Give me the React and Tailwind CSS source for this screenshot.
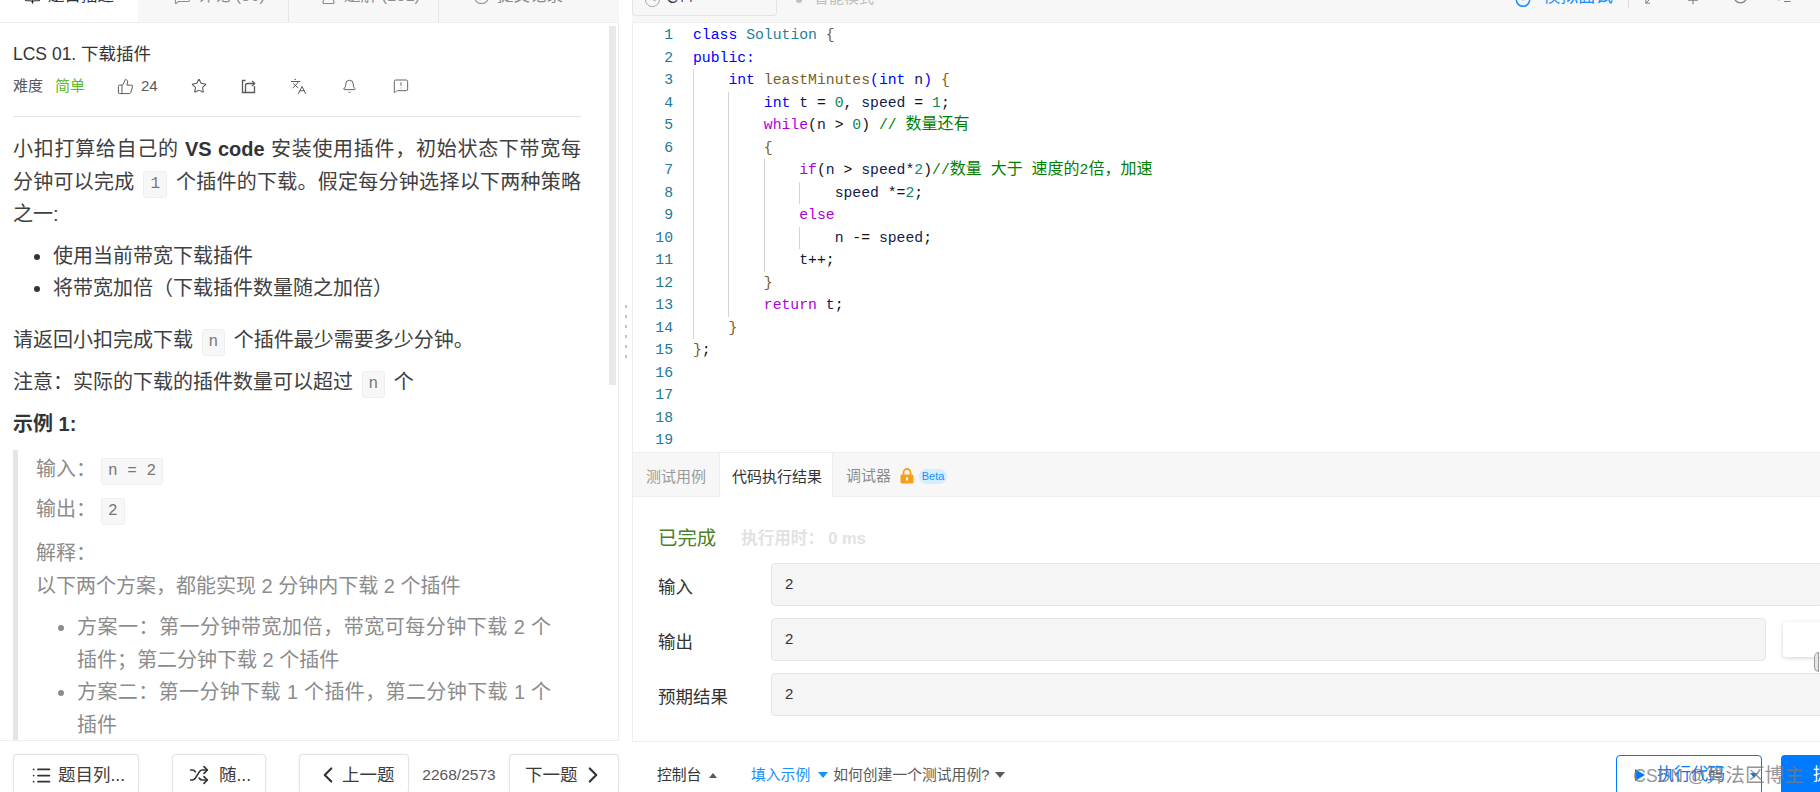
import React from "react";
import {
  ThumbsUp, Star, Languages, Bell, MessageSquareWarning, List, Shuffle, ChevronLeft, ChevronRight,
  BookOpen, MessageSquare, FlaskConical, Clock, Pin, RotateCcw, Terminal, Timer, Maximize2,
} from "lucide-react";

const sans = "[font-family:'Liberation_Sans','Noto_Sans_CJK_SC',sans-serif]";

function C({ children, cls }) {
  return (
    <code className={["inline-block h-[27px] mx-[3px] px-[6px] align-[1px] rounded-[3px] border border-[#eeeeee] bg-[#f7f7f7] text-[#777777] text-[16px] leading-[25px] [font-family:'Liberation_Mono',monospace]", cls].join(" ")}>
      {children}
    </code>
  );
}

const K = ({ children }) => <span className="text-[#0000ff]">{children}</span>;
const P = ({ children }) => <span className="text-[#af00db]">{children}</span>;
const N = ({ children }) => <span className="text-[#098658]">{children}</span>;
const V = ({ children }) => <span className="text-[#111a4d]">{children}</span>;
const F = ({ children }) => <span className="text-[#795e26]">{children}</span>;
const T = ({ children }) => <span className="text-[#267f99]">{children}</span>;
const G = ({ children }) => <span className="text-[#008000]">{children}</span>;
const Z = ({ children }) => (
  <span className="text-[16px] leading-[0] [font-family:'Noto_Sans_CJK_SC',sans-serif]">{children}</span>
);

const lines = [
  { g: 0, c: <><K>class</K> <T>Solution</T> <F>{"{"}</F></> },
  { g: 0, c: <K>public:</K> },
  { g: 1, c: <>{"    "}<K>int</K> <F>leastMinutes</F><K>(</K><K>int</K> <V>n</V><K>)</K> <F>{"{"}</F></> },
  { g: 2, c: <>{"        "}<K>int</K> <V>t</V> = <N>0</N>, <V>speed</V> = <N>1</N>;</> },
  { g: 2, c: <>{"        "}<P>while</P>(<V>n</V> &gt; <N>0</N>) <G>// <Z>数量还有</Z></G></> },
  { g: 2, c: <>{"        "}<F>{"{"}</F></> },
  { g: 3, c: <>{"            "}<P>if</P>(<V>n</V> &gt; <V>speed</V>*<N>2</N>)<G>//<Z>数量</Z> <Z>大于</Z> <Z>速度的</Z>2<Z>倍，加速</Z></G></> },
  { g: 4, c: <>{"                "}<V>speed</V> *=<N>2</N>;</> },
  { g: 3, c: <>{"            "}<P>else</P></> },
  { g: 4, c: <>{"                "}<V>n</V> -= <V>speed</V>;</> },
  { g: 3, c: <>{"            "}<V>t</V>++;</> },
  { g: 2, c: <>{"        "}<F>{"}"}</F></> },
  { g: 2, c: <>{"        "}<P>return</P> <V>t</V>;</> },
  { g: 1, c: <>{"    "}<F>{"}"}</F></> },
  { g: 0, c: <><F>{"}"}</F>;</> },
  { g: 0, c: null },
  { g: 0, c: null },
  { g: 0, c: null },
  { g: 0, c: null },
];

function CodeLine({ n, line }) {
  return (
    <div className="flex h-[22.5px] leading-[22.5px]">
      <div className="w-[40px] text-right text-[#237893] shrink-0">{n}</div>
      <div className="relative ml-[20px] whitespace-pre text-[#111111]">
        {[0, 1, 2, 3].slice(0, line.g).map((i) => (
          <span key={i} className={["absolute top-0 h-full w-px bg-[#d3d3d3]", ["left-0", "left-[35px]", "left-[71px]", "left-[106px]"][i]].join(" ")} />
        ))}
        {line.c}
      </div>
    </div>
  );
}

function ShareIcon() {
  return (
    <svg width="16" height="16" viewBox="0 0 16 16" fill="none" stroke="#595959" strokeWidth="1.3">
      <path d="M4.5 2.5H1.5v12h12V8" />
      <path d="M4.5 14V7.5a2 2 0 0 1 2-2h7" />
      <path d="M11 3l2.8 2.5L11 8" strokeWidth="1.1" />
    </svg>
  );
}

function LockIcon() {
  return (
    <svg width="14" height="16" viewBox="0 0 14 16" className="ml-[9px]">
      <path d="M3.5 7V4.5a3.5 3.5 0 0 1 7 0V7" fill="none" stroke="#fa9d1c" strokeWidth="1.8" />
      <rect x="0.5" y="6.5" width="13" height="9" rx="1.5" fill="#fa9d1c" />
      <rect x="6" y="9.5" width="2" height="3" fill="#ffffff" />
    </svg>
  );
}

function TopTab({ icon: Icon, label, cls }) {
  return (
    <div className={["h-[23px] flex items-end pb-[18px] gap-[7px] text-[16.5px] leading-[20px]", cls].join(" ")}>
      <Icon size={17} strokeWidth={1.5} className="shrink-0" />
      <span className="whitespace-nowrap">{label}</span>
    </div>
  );
}

function Row({ label, children }) {
  return (
    <div className="flex mb-[12px] h-[43px]">
      <div className="w-[138px] pl-[25px] pt-[12px] text-[17.5px] leading-[24px] text-[#333333] shrink-0">{label}</div>
      {children}
    </div>
  );
}

function Box({ cls }) {
  return (
    <div className={["h-[43px] px-[13px] pt-[9px] rounded-[4px] border border-[#e4e4e4] bg-[#f5f5f5] text-[15px] leading-[22px] text-[#333333]", cls].join(" ")}>
      2
    </div>
  );
}

function Btn({ cls, children }) {
  return (
    <div className={["h-[40px] shrink-0 flex items-center pt-[2px] rounded-[4px] border border-[#e4e4e4] bg-white text-[17.5px] text-[#3c3c3c] shadow-[0_0_2px_rgba(0,0,0,0.08)]", cls].join(" ")}>
      {children}
    </div>
  );
}

export default function App() {
  return (
    <div className={"relative w-[1820px] h-[792px] overflow-hidden bg-white flex " + sans}>
      {/* left column */}
      <div className="w-[619px] h-full flex flex-col shrink-0">
        <div className="h-[23px] flex bg-[#f7f7f7] border-b border-[#eeeeee] text-[#8c8c8c] overflow-hidden shrink-0">
          <TopTab icon={BookOpen} label="题目描述" cls="w-[138px] pl-[24px] bg-white -mb-px text-[#333333]" />
          <TopTab icon={MessageSquare} label="评论 (56)" cls="w-[151px] pl-[36px] border-r border-[#e6e6e6]" />
          <TopTab icon={FlaskConical} label="题解 (151)" cls="w-[150px] pl-[31px] border-r border-[#e6e6e6]" />
          <TopTab icon={Clock} label="提交记录" cls="pl-[34px]" />
        </div>

        <div className="relative flex-1 border-r border-b border-[#eeeeee] overflow-hidden pl-[13px] text-[#404040]">
          <div className="absolute right-[2px] top-[3px] w-[7px] h-[359px] bg-[#e9e9e9]" />
          <div className="w-[568px]">
            <div className="pt-[19px] text-[17.5px] leading-[24px] text-[#333333]">LCS 01. 下载插件</div>
            <div className="mt-[9px] h-[22px] flex items-center text-[15px] text-[#595959]">
              <span className="w-[42px]">难度</span>
              <span className="w-[63px] text-[#5cb82c]">简单</span>
              <ThumbsUp size={17} strokeWidth={1.4} className="ml-[-1px]" />
              <span className="ml-[7px] w-[50px]">24</span>
              <Star size={16} strokeWidth={1.6} />
              <span className="ml-[34px]"><ShareIcon /></span>
              <Languages size={17} strokeWidth={1.4} className="ml-[33px]" />
              <Bell size={15} strokeWidth={1.5} className="ml-[35px]" />
              <MessageSquareWarning size={16} strokeWidth={1.4} className="ml-[36px]" />
            </div>
            <div className="mt-[19px] h-px bg-[#e5e5e5]" />

            <div className="mt-[16px] text-[20px] leading-[32.5px] text-justify">
              小扣打算给自己的 <b className="font-bold text-[#333333]">VS code</b> 安装使用插件，初始状态下带宽每分钟可以完成 <C>1</C> 个插件的下载。假定每分钟选择以下两种策略之一:
            </div>
            <ul className="mt-[9px] list-disc pl-[40px] text-[20px] leading-[32.5px] marker:text-[#333333]">
              <li>使用当前带宽下载插件</li>
              <li>将带宽加倍（下载插件数量随之加倍）</li>
            </ul>
            <div className="mt-[19px] text-[20px] leading-[32.5px]">
              请返回小扣完成下载 <C>n</C> 个插件最少需要多少分钟。
            </div>
            <div className="mt-[10px] text-[20px] leading-[32.5px]">
              注意：实际的下载的插件数量可以超过 <C>n</C> 个
            </div>
            <div className="mt-[9px] text-[20px] leading-[32.5px] font-bold text-[#333333]">示例 1:</div>

            <div className="mt-[10px] border-l-[5px] border-[#e4e4e4] pl-[18px] pr-[30px] text-[20px] leading-[32.5px] text-[#8c8c8c] text-justify">
              <div className="pt-[3px]">输入：<C cls="ml-[5px]">n = 2</C></div>
              <div className="mt-[7px]">输出：<C cls="ml-[5px]">2</C></div>
              <div className="mt-[12px]">解释：</div>
              <div>以下两个方案，都能实现 2 分钟内下载 2 个插件</div>
              <ul className="mt-[9px] list-disc pl-[41px]">
                <li>方案一：第一分钟带宽加倍，带宽可每分钟下载 2 个插件；第二分钟下载 2 个插件</li>
                <li>方案二：第一分钟下载 1 个插件，第二分钟下载 1 个插件</li>
              </ul>
            </div>
          </div>
        </div>

        <div className="h-[51px] pt-[13px] pl-[13px] flex items-start shrink-0">
          <Btn cls="w-[126px] pl-[17px]">
            <List size={21} strokeWidth={2} className="text-[#333333]" />
            <span className="ml-[6px]">题目列...</span>
          </Btn>
          <Btn cls="w-[94px] ml-[33px] pl-[16px]">
            <Shuffle size={20} strokeWidth={2} className="text-[#333333]" />
            <span className="ml-[10px]">随...</span>
          </Btn>
          <Btn cls="w-[110px] ml-[33px] pl-[15px]">
            <ChevronLeft size={26} strokeWidth={2} className="text-[#333333]" />
            <span className="ml-[1px]">上一题</span>
          </Btn>
          <div className="w-[100px] h-[40px] text-center text-[15.5px] leading-[42px] text-[#595959] shrink-0">2268/2573</div>
          <Btn cls="w-[110px] pl-[15px]">
            <span>下一题</span>
            <ChevronRight size={26} strokeWidth={2} className="ml-[2px] text-[#333333]" />
          </Btn>
        </div>
      </div>

      {/* divider */}
      <div className="w-[13px] h-full shrink-0 flex flex-col items-center pt-[305px] gap-[7px]">
        {[0, 1, 2, 3, 4, 5].map((i) => (
          <span key={i} className="w-[2px] h-[3px] bg-[#c4c4c4]" />
        ))}
      </div>

      {/* right column */}
      <div className="flex-1 min-w-0 h-full flex flex-col">
        <div className="h-[23px] flex items-start bg-[#f7f7f7] border-b border-[#eeeeee] overflow-hidden shrink-0 text-[#8c8c8c]">
          <div className="w-[145px] h-[16px] flex items-end pl-[11px] pb-[7px] gap-[6px] rounded-b-[4px] border border-[#e4e4e4] border-t-0 text-[#333333] text-[15px] leading-[20px] shrink-0">
            <Clock size={17} strokeWidth={1.3} className="text-[#a0a0a0]" />
            <span>C++</span>
          </div>
          <span className="ml-[19px] w-[6px] h-[3px] rounded-b-full bg-[#bfbfbf] shrink-0" />
          <div className="h-[8px] flex items-end ml-[12px] text-[15px] leading-[20px] text-[#bfbfbf] whitespace-nowrap shrink-0">
            <span>智能模式</span>
          </div>
          <div className="flex-1" />
          <div className="h-[8px] flex items-end gap-[10px] text-[#1890ff] text-[17.5px] leading-[24px] whitespace-nowrap shrink-0">
            <Timer size={20} strokeWidth={1.8} />
            <span>模拟面试</span>
          </div>
          <div className="w-px h-[8px] ml-[15px] bg-[#dcdcdc] shrink-0" />
          <div className="h-[5px] flex items-end text-[#7d7d7d] shrink-0">
            <Maximize2 size={15} strokeWidth={1.6} className="ml-[15px]" />
            <Pin size={16} strokeWidth={1.6} className="ml-[26px]" />
            <RotateCcw size={17} strokeWidth={1.6} className="ml-[31px]" />
            <Terminal size={17} strokeWidth={1.6} className="ml-[27px] mr-[27px]" />
          </div>
        </div>

        <div className="flex-1 min-h-0 border-l border-[#eeeeee] flex flex-col">
          <div className="h-[429px] pt-px overflow-hidden text-[14.75px] [font-family:'Liberation_Mono','Noto_Sans_CJK_SC',monospace] shrink-0">
            {lines.map((l, i) => (
              <CodeLine key={i} n={i + 1} line={l} />
            ))}
          </div>

          <div className="h-[45px] flex bg-[#f7f7f7] border-y border-[#eeeeee] text-[15px] shrink-0">
            <div className="w-[86px] pl-[13px] leading-[47px] text-[#9a9a9a]">测试用例</div>
            <div className="w-[114px] h-[44px] pl-[12px] leading-[47px] bg-white border-x border-[#eeeeee] text-[#333333] -mb-px">代码执行结果</div>
            <div className="pl-[13px] flex items-center h-[46px] text-[#8c8c8c]">
              调试器
              <LockIcon />
              <span className="ml-[5px] h-[15px] w-[28px] rounded-full bg-[#d6ecff] text-[#1890ff] text-[11px] leading-[15px] text-center">Beta</span>
            </div>
          </div>

          <div className="flex-1 min-h-0 overflow-hidden">
            <div className="h-[66px] pl-[25px] pt-[15px] flex items-center">
              <span className="text-[19.4px] leading-[24px] text-[#4b7f25]">已完成</span>
              <span className="ml-[25px] text-[16.5px] leading-[24px] font-bold text-[#e2e2e2]">执行用时： 0 ms</span>
            </div>
            <Row label="输入"><Box cls="flex-1 -mr-[3px]" /></Row>
            <Row label="输出">
              <Box cls="w-[995px] shrink-0" />
              <div className="relative ml-[17px] mt-[4px] w-[44px] h-[35px] rounded-[3px] bg-white shadow-[0_1px_4px_rgba(0,0,0,0.18)] shrink-0" />
            </Row>
            <Row label="预期结果"><Box cls="flex-1 -mr-[3px]" /></Row>
          </div>
        </div>

        <div className="h-[51px] border-t border-[#eeeeee] pt-[13px] flex items-start shrink-0 text-[14.8px]">
          <div className="h-[40px] flex items-center pl-[25px] w-[119px] text-[#333333] shrink-0">
            控制台
            <span className="ml-[8px] w-0 h-0 border-x-[4px] border-x-transparent border-b-[5px] border-b-[#595959]" />
          </div>
          <div className="h-[40px] flex items-center text-[#1890ff] shrink-0">
            填入示例
            <span className="ml-[8px] w-0 h-0 border-x-[5px] border-x-transparent border-t-[6px] border-t-[#1890ff]" />
          </div>
          <div className="h-[40px] flex items-center ml-[5px] text-[#595959] shrink-0">
            如何创建一个测试用例?
            <span className="ml-[6px] w-0 h-0 border-x-[5px] border-x-transparent border-t-[6px] border-t-[#595959]" />
          </div>
          <div className="flex-1" />
          <div className="w-[146px] h-[40px] flex items-center pl-[18px] rounded-[4px] border border-[#007aff] text-[#007aff] text-[17px] shrink-0">
            <span className="w-0 h-0 border-y-[6px] border-y-transparent border-l-[10px] border-l-[#007aff]" />
            <span className="ml-[12px]">执行代码</span>
            <span className="ml-[25px] w-0 h-0 border-x-[4px] border-x-transparent border-t-[5px] border-t-[#007aff]" />
          </div>
          <div className="w-[39px] h-[40px] ml-[19px] pl-[32px] bg-[#007aff] text-white text-[17px] leading-[40px] rounded-tl-[4px] whitespace-nowrap overflow-hidden shrink-0">提交</div>
        </div>
      </div>

      {/* overlays */}
      <div className="absolute right-[1px] top-[652px] w-[5px] h-[20px] rounded-l-full border border-[#9a9a9a] bg-[#e6e6e6]" />
      <div className="absolute right-[16px] top-[761px] text-[19.7px] leading-[28px] text-[#7a7a7a]/80 whitespace-nowrap">
        <span className="text-[17.5px]">CSDN @</span>算法区博主
      </div>
    </div>
  );
}
